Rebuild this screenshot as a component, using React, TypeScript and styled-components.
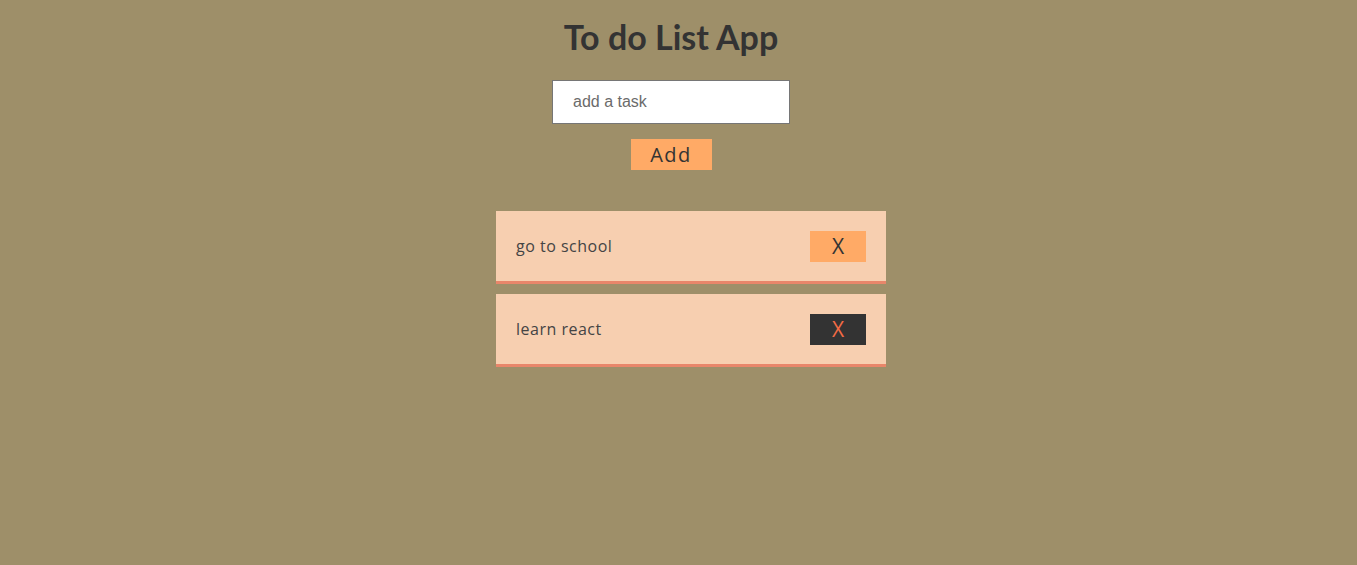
import { useState } from "react";
import { styled, createGlobalStyle } from "styled-components";

const GlobalStyle = createGlobalStyle`
  body {
    margin: 8px;
    background: #9e8f69;
    font-family: "Open Sans", "Noto Sans", sans-serif;
  }
`;

const Page = styled.div`
  min-height: 100vh;
  padding-right: 15px;
  display: flex;
  flex-direction: column;
  align-items: center;
`;

const Title = styled.h1`
  margin: 5px 0 0;
  font-family: "Lato", "Open Sans", sans-serif;
  font-size: 34px;
  font-weight: 700;
  color: #333333;
  line-height: 48px;
`;

const TaskInput = styled.input`
  margin-top: 19px;
  width: 238px;
  height: 44px;
  box-sizing: border-box;
  padding: 0 20px;
  border: 1px solid #767676;
  background: #ffffff;
  font-family: "Liberation Sans", Arial, sans-serif;
  font-size: 16px;
  color: #333333;
  outline: none;

  &::placeholder {
    color: #6b6b6b;
  }
`;

const AddButton = styled.button`
  margin-top: 15px;
  width: 81px;
  height: 31px;
  border: none;
  background: #ffaa66;
  color: #333333;
  font-family: "Open Sans", sans-serif;
  font-size: 20px;
  letter-spacing: 1.5px;
  cursor: pointer;
  padding: 0;
`;

const TaskList = styled.ul`
  list-style: none;
  margin: 41px 0 0;
  padding: 0 0 0 40px;
  width: 390px;
  display: flex;
  flex-direction: column;
  gap: 10px;
`;

const TaskItem = styled.li`
  display: flex;
  align-items: center;
  justify-content: space-between;
  height: 70px;
  padding: 0 20px;
  background: #f7cfb0;
  border-bottom: 3px solid #e8866a;
`;

const TaskText = styled.span`
  font-family: "Open Sans", sans-serif;
  font-size: 16px;
  letter-spacing: 0.5px;
  color: #444444;
`;

const DeleteButton = styled.button<{ $dark?: boolean }>`
  width: 56px;
  height: 31px;
  border: none;
  padding: 0;
  background: ${(p) => (p.$dark ? "#333333" : "#ffaa66")};
  color: ${(p) => (p.$dark ? "#f26b45" : "#333333")};
  font-family: "Open Sans", sans-serif;
  font-size: 21px;
  cursor: pointer;
`;

export default function App() {
  const [tasks, setTasks] = useState(["go to school", "learn react"]);
  const [value, setValue] = useState("");

  const addTask = () => {
    if (!value.trim()) return;
    setTasks([...tasks, value.trim()]);
    setValue("");
  };

  return (
    <>
      <GlobalStyle />
      <Page>
        <Title>To do List App</Title>
        <TaskInput
          placeholder="add a task"
          value={value}
          onChange={(e) => setValue(e.target.value)}
        />
        <AddButton onClick={addTask}>Add</AddButton>
        <TaskList>
          {tasks.map((task, i) => (
            <TaskItem key={task + i}>
              <TaskText>{task}</TaskText>
              <DeleteButton
                $dark={i === 1}
                onClick={() => setTasks(tasks.filter((_, j) => j !== i))}
              >
                X
              </DeleteButton>
            </TaskItem>
          ))}
        </TaskList>
      </Page>
    </>
  );
}
